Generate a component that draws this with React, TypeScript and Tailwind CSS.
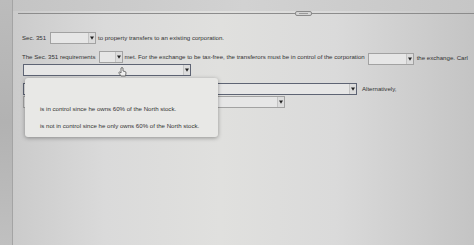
import React from "react";

function Arrow() {
  return (
    <span className="flex h-full w-[7px] items-center justify-center border-l border-[#c4c4c4] bg-[#dcdcdc]">
      <svg width="4" height="4" viewBox="0 0 4 4">
        <path d="M0 0.5 L4 0.5 L2 3.8 Z" fill="#222" />
      </svg>
    </span>
  );
}

function Sel({ w, dark }: { w: string; dark?: boolean }) {
  return (
    <span
      className={
        "flex h-[12px] shrink-0 items-stretch justify-end bg-[#e6e6e6] " +
        w +
        (dark ? " border-[1.5px] border-[#5e6474]" : " border border-[#a2a2a2]")
      }
    >
      <Arrow />
    </span>
  );
}

export default function App() {
  return (
    <div
      className="relative flex h-[245px] w-[474px] overflow-hidden text-[6.1px] leading-none text-[#333333]"
      style={{ fontFamily: '"Liberation Sans", Arial, sans-serif' }}
    >
      <div className="w-[13px] shrink-0 bg-[linear-gradient(180deg,#bcbcbc,#b2b2b2_50%,#c0c0c0)] border-r border-[#a4a4a4]" />
      <div className="flex flex-1 flex-col bg-[linear-gradient(90deg,#cbcbcb_0%,#dadada_20%,#e0e0de_45%,#dadada_70%,#c4c4c4_100%)]">
        <div className="h-[11px] shrink-0 bg-[linear-gradient(90deg,#c4c4c4,#d2d2d2_50%,#c6c6c6)]" />
        <div className="ml-[5px] flex h-[4px] items-center">
          <div className="h-px w-[277px] bg-[#8c8c8c]" />
          <div className="flex h-[5px] w-[17px] items-center justify-center rounded-[2px] border border-[#8a8a8a] bg-[#d4d4d4]">
            <div className="h-[1px] w-[9px] bg-[#9a9a9a]" />
          </div>
          <div className="h-px flex-1 bg-[#8c8c8c]" />
        </div>
        <div className="relative flex flex-col pl-[9px] pt-[17px]">
          <div className="flex h-[12px] items-center">
            <span>Sec. 351</span>
            <span className="ml-[4px]"><Sel w="w-[46px]" /></span>
            <span className="ml-[2px]">to property transfers to an existing corporation.</span>
          </div>
          <div className="mt-[7px] flex h-[12px] items-center">
            <span>The Sec. 351 requirements</span>
            <span className="ml-[3px]"><Sel w="w-[24px]" /></span>
            <span className="ml-[2px]">met. For the exchange to be tax-free, the transferors must be in control of the corporation</span>
            <span className="ml-[3px] mt-[3px]"><Sel w="w-[46px]" /></span>
            <span className="ml-[3px] mt-[3px]">the exchange. Carl</span>
          </div>
          <div className="mt-[1px] ml-[1px] flex">
            <Sel w="w-[168px]" dark />
          </div>
          <div className="mt-[7px] ml-[1px] flex h-[12px] items-center">
            <Sel w="w-[334px]" dark />
            <span className="ml-[5px]">Alternatively,</span>
          </div>
          <div className="mt-[1px] ml-[1px] flex">
            <Sel w="w-[262px]" />
          </div>

          <svg className="absolute left-[105px] top-[52px]" width="9" height="10" viewBox="0 0 9 10">
            <path d="M3 1 L3 6 L1.5 5 Q0.5 5 1 6.2 L3 9 L7.5 9 L8 6 Q8 4.5 7 4.5 L5 4 L5 1 Q4 0 3 1 Z" fill="#f0f0f0" stroke="#555" strokeWidth="0.8" />
          </svg>

          <div className="absolute left-[12px] top-[63px] flex h-[59px] w-[193px] flex-col rounded-[3px] bg-[#e8e8e6] pl-[15px] pt-[28px] shadow-[0_1px_4px_rgba(0,0,0,0.35)]">
            <span>is in control since he owns 60% of the North stock.</span>
            <span className="mt-[11px]">is not in control since he only owns 60% of the North stock.</span>
          </div>
        </div>
      </div>
    </div>
  );
}
